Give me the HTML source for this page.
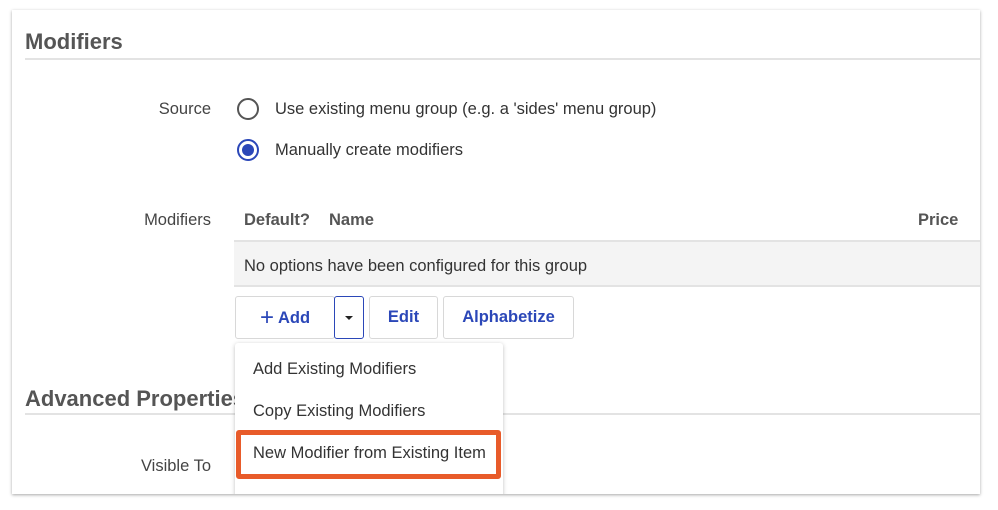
<!DOCTYPE html>
<html><head><meta charset="utf-8"><style>
*{margin:0;padding:0;box-sizing:border-box}
body{width:998px;height:510px;background:#fff;font-family:"Liberation Sans",sans-serif;position:relative;overflow:hidden}
.panel{position:absolute;left:12px;top:10px;width:968px;height:484px;background:#fff;box-shadow:0 1px 3px rgba(0,0,0,.35);overflow:hidden}
.a{position:absolute;white-space:nowrap}
.h{font-size:22px;font-weight:bold;color:#555}
.lbl{font-size:16.5px;color:#444;text-align:right;width:120px}
.t{font-size:16.5px;color:#333}
.line{position:absolute;height:2px;background:#e3e3e3}
.radio{position:absolute;width:22px;height:22px;border:2px solid #555;border-radius:50%}
.btn{position:absolute;height:43px;border:1px solid #d8d8d8;border-radius:3px;background:#fff;color:#2b47b8;font-weight:bold;font-size:16.5px;text-align:center;line-height:41px}
</style></head><body>
<div class="panel">
<div class="a h" style="left:13px;top:19px">Modifiers</div>
<div class="line" style="left:13px;top:48px;width:960px"></div>
<div class="a lbl" style="left:79px;top:90px">Source</div>
<div class="radio" style="left:225px;top:88px"></div>
<div class="a t" style="left:263px;top:90px">Use existing menu group (e.g. a 'sides' menu group)</div>
<div class="radio" style="left:225px;top:129px;border-color:#2b47b8"><div style="position:absolute;left:3px;top:3px;width:12px;height:12px;border-radius:50%;background:#2b47b8"></div></div>
<div class="a t" style="left:263px;top:131px">Manually create modifiers</div>
<div class="a lbl" style="left:79px;top:201px">Modifiers</div>
<div class="a" style="left:232px;top:201px;font-size:16.5px;font-weight:bold;color:#555">Default?</div>
<div class="a" style="left:317px;top:201px;font-size:16.5px;font-weight:bold;color:#555">Name</div>
<div class="a" style="left:906px;top:201px;font-size:16.5px;font-weight:bold;color:#555">Price</div>
<div class="line" style="left:222px;top:230px;width:750px"></div>
<div style="position:absolute;left:222px;top:232px;width:750px;height:43px;background:#f4f4f4"></div>
<div class="a t" style="left:232px;top:247px">No options have been configured for this group</div>
<div class="line" style="left:222px;top:275px;width:750px"></div>
<div class="line" style="left:13px;top:403px;width:960px"></div>
<div class="a h" style="left:13px;top:376px">Advanced Properties</div>
<div class="a lbl" style="left:79px;top:447px">Visible To</div>
<div class="btn" style="left:223px;top:286px;width:100px"><span style="font-weight:normal;font-size:24px;vertical-align:-2px">+</span> Add</div>
<div class="btn" style="left:322px;top:286px;width:30px;border:1px solid #2b47b8"><div style="position:absolute;left:10px;top:19px;border-left:4px solid transparent;border-right:4px solid transparent;border-top:4px solid #222"></div></div>
<div class="btn" style="left:357px;top:286px;width:69px">Edit</div>
<div class="btn" style="left:431px;top:286px;width:131px">Alphabetize</div>
<div style="position:absolute;left:223px;top:333px;width:268px;height:160px;background:#fff;box-shadow:0 1px 4px rgba(0,0,0,.25);border-radius:3px">
<div class="a t" style="left:18px;top:17px">Add Existing Modifiers</div>
<div class="a t" style="left:18px;top:59px">Copy Existing Modifiers</div>
<div style="position:absolute;left:1px;top:87px;width:265px;height:49px;border:5px solid #e85b2a;border-radius:3px"></div>
<div class="a t" style="left:18px;top:101px">New Modifier from Existing Item</div>
</div>
</div>
</body></html>
